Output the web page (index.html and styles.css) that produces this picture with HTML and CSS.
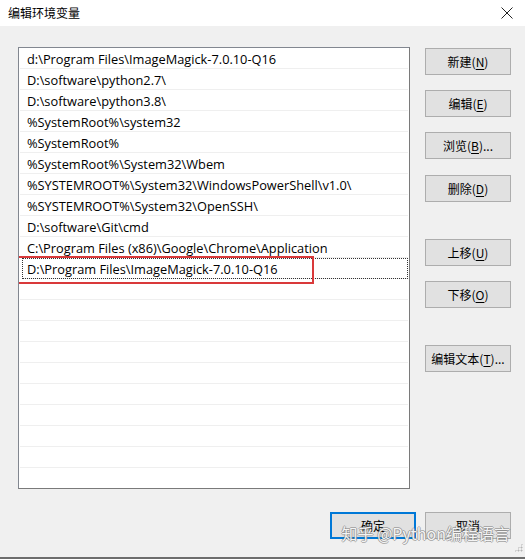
FILE: index.html
```html
<!DOCTYPE html>
<html lang="zh">
<head>
<meta charset="utf-8">
<title>编辑环境变量</title>
<link rel="stylesheet" href="styles.css">
</head>
<body>
<div class="window">
  <div class="titlebar">
    <span class="title">编辑环境变量</span>
    <svg class="close" width="12" height="12" viewBox="0 0 12 12"><path d="M0.5 0.5 L11.5 11.5 M11.5 0.5 L0.5 11.5" stroke="#222" stroke-width="1" fill="none"/></svg>
  </div>
  <div class="content">
    <div class="main">
      <div class="listbox">
        <div class="row">d:\Program Files\ImageMagick-7.0.10-Q16</div>
        <div class="row">D:\software\python2.7\</div>
        <div class="row">D:\software\python3.8\</div>
        <div class="row">%SystemRoot%\system32</div>
        <div class="row">%SystemRoot%</div>
        <div class="row">%SystemRoot%\System32\Wbem</div>
        <div class="row">%SYSTEMROOT%\System32\WindowsPowerShell\v1.0\</div>
        <div class="row">%SYSTEMROOT%\System32\OpenSSH\</div>
        <div class="row">D:\software\Git\cmd</div>
        <div class="row">C:\Program Files (x86)\Google\Chrome\Application</div>
        <div class="row focus">D:\Program Files\ImageMagick-7.0.10-Q16<span class="highlight"></span></div>
        <div class="row"></div><div class="row"></div><div class="row"></div><div class="row"></div>
        <div class="row"></div><div class="row"></div><div class="row"></div><div class="row"></div>
        <div class="row"></div><div class="row last"></div>
      </div>
      <div class="buttons">
        <button class="btn">新建(<u>N</u>)</button>
        <button class="btn g15">编辑(<u>E</u>)</button>
        <button class="btn g15">浏览(<u>B</u>)...</button>
        <button class="btn g16">删除(<u>D</u>)</button>
        <button class="btn g37">上移(<u>U</u>)</button>
        <button class="btn g15">下移(<u>O</u>)</button>
        <button class="btn g37">编辑文本(<u>T</u>)...</button>
      </div>
    </div>
    <div class="footer">
      <button class="btn ok">确定</button>
      <button class="btn">取消</button>
      <span class="watermark">知乎 @Python编程语言</span>
      <span class="grip"></span>
    </div>
  </div>
</div>
</body>
</html>
```
FILE: styles.css
```css
* { box-sizing: border-box; }
html, body { margin: 0; padding: 0; }
body {
  width: 525px;
  height: 559px;
  font-family: "Open Sans", "Noto Sans CJK SC", sans-serif;
  font-size: 12px;
  color: #000;
  background: #f0f0f0;
  overflow: hidden;
}
.window {
  width: 525px;
  height: 559px;
  display: flex;
  flex-direction: column;
  border-bottom: 2px solid #6d6d6d;
}
.titlebar {
  height: 26px;
  background: #fff;
  display: flex;
  align-items: center;
  justify-content: space-between;
  padding: 0 12px 1px 8px;
}
.title {
  font-family: "Noto Sans CJK SC", sans-serif;
  font-size: 12px;
  color: #000;
}
.close { display: block; }
.content {
  flex: 1;
  display: flex;
  flex-direction: column;
  padding: 21px 14px 0 18px;
  position: relative;
}
.main {
  display: flex;
  gap: 15px;
}
.listbox {
  width: 392px;
  height: 442px;
  background: #fff;
  border: 1px solid #828790;
  border-right-color: #7a7a7a;
  border-bottom-color: #7a7a7a;
  padding: 0 1px 0 1px;
  overflow: hidden;
}
.row {
  height: 21px;
  line-height: 18px;
  padding-top: 2px;
  padding-left: 7px;
  font-size: 12.8px;
  border-bottom: 1px solid #efefef;
  white-space: nowrap;
  position: relative;
}
.row.last { border-bottom: none; }
.row.focus {
  outline: 1px dotted #333;
  outline-offset: -1px;
  margin-left: 2px;
  padding-left: 5px;
}
.highlight {
  position: absolute;
  left: -8px;
  top: -2px;
  width: 300px;
  height: 28px;
  border: 2.5px solid #d9393a;
}
.buttons {
  display: flex;
  flex-direction: column;
  width: 86px;
  padding-top: 1px;
}
.btn {
  width: 86px;
  height: 27px;
  background: #e1e1e1;
  border: 1px solid #adadad;
  font-family: "Noto Sans CJK SC", sans-serif;
  font-size: 12px;
  color: #000;
  padding: 0;
  margin: 0;
}
.btn u { text-decoration: underline; text-underline-offset: 2px; }
.g15 { margin-top: 15px; }
.g16 { margin-top: 16px; }
.g37 { margin-top: 37px; }
.footer {
  display: flex;
  justify-content: flex-end;
  gap: 9px;
  margin-top: 23px;
  position: relative;
}
.btn.ok {
  border: 2px solid #0078d7;
}
.watermark {
  position: absolute;
  right: 1px;
  top: 10px;
  font-family: "Noto Sans CJK SC", sans-serif;
  font-size: 16px;
  line-height: 22px;
  color: rgba(255,255,255,0.92);
  text-shadow: 1px 0 0 rgba(120,120,120,0.55), -1px 0 0 rgba(120,120,120,0.55), 0 1px 0 rgba(120,120,120,0.55), 0 -1px 0 rgba(120,120,120,0.55);
}
.grip {
  position: absolute;
  right: -12px;
  top: 31px;
  width: 9px;
  height: 9px;
  background: radial-gradient(circle, #b5b5b5 0.8px, transparent 1.2px) 0 0 / 3px 3px;
  clip-path: polygon(100% 0, 100% 100%, 0 100%);
}
```
